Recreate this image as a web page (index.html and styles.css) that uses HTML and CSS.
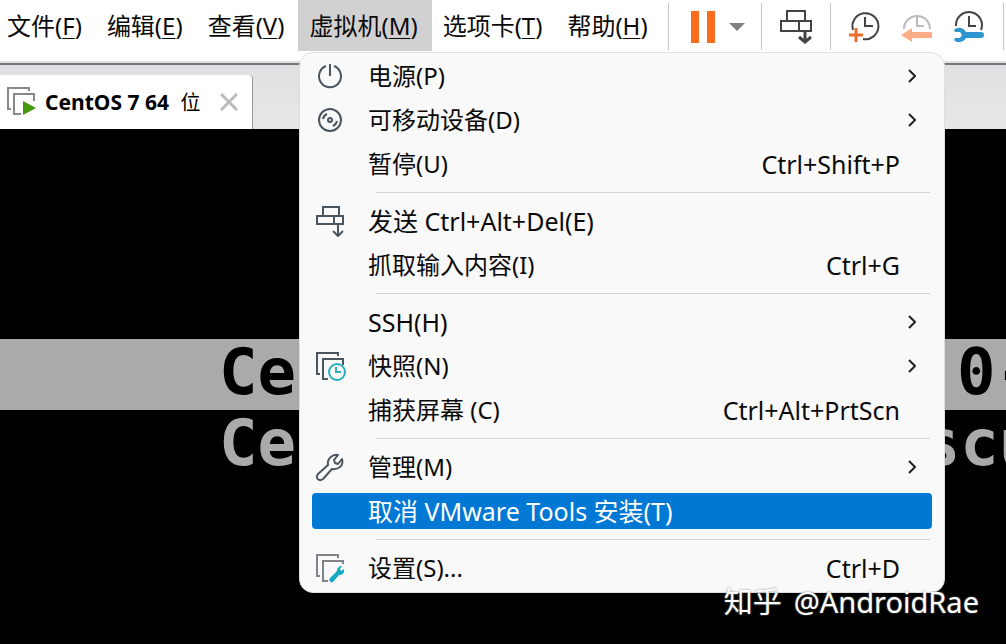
FILE: index.html
```html
<!DOCTYPE html>
<html lang="zh-CN">
<head>
<meta charset="utf-8">
<title>CentOS 7 64 位</title>
<link rel="stylesheet" href="styles.css">
</head>
<body>
<svg class="defs" aria-hidden="true">
  <symbol id="send" viewBox="0 0 32 34">
    <g fill="none" stroke="currentColor" stroke-width="2"><path d="M7 11V1h18v10M1 11h30v10H1zM19 11v10"/><path stroke-width="3" d="M25 21v11M19 27l6 5 6-5"/></g>
  </symbol>
  <symbol id="sheets" viewBox="0 0 30 30">
    <path fill="none" stroke="currentColor" stroke-width="2" d="M4 22H1V1h21v3M12 27H7V7h20v6"/>
  </symbol>
  <symbol id="chevron" viewBox="0 0 8 14"><path d="M1 1l6 6-6 6" fill="none" stroke="#222" stroke-width="2"/></symbol>
</svg>
<header class="topbar">
  <nav class="menubar">
    <button>文件(<u>F</u>)</button>
    <button>编辑(<u>E</u>)</button>
    <button>查看(<u>V</u>)</button>
    <button class="open" aria-expanded="true">虚拟机(<u>M</u>)</button>
    <button>选项卡(<u>T</u>)</button>
    <button>帮助(<u>H</u>)</button>
  </nav>
  <div class="tools tools-power">
    <button aria-label="暂停"><svg width="24" height="32" viewBox="0 0 24 32"><path fill="#f96b1d" d="M0 0h8v32H0zM16 0h8v32h-8z"/></svg></button>
    <button aria-label="电源选项"><svg width="16" height="8" viewBox="0 0 16 8"><path fill="#808080" d="M0 0h16L8 8z"/></svg></button>
  </div>
  <div class="tools tools-send">
    <button aria-label="发送 Ctrl+Alt+Del"><svg width="32" height="34"><use href="#send"/></svg></button>
  </div>
  <div class="tools tools-snap">
    <button aria-label="拍摄快照"><svg width="32" height="32" viewBox="0 0 32 32" fill="none" stroke="#444" stroke-width="2"><path d="M4 19A13 13 0 1 1 14 28M16 6v9h8"/><path stroke="#e8702c" stroke-width="3" d="M0 24h14M7 17v14"/></svg></button>
    <button aria-label="恢复快照"><svg width="32" height="32" viewBox="0 0 32 32" fill="none" stroke="#bbb" stroke-width="2"><path d="M3 18A13 13 0 1 1 29 18M16 5v10h7"/><path fill="#fbae86" stroke="none" d="M0 24l11-7v4h20v6H11v4z"/></svg></button>
    <button aria-label="管理快照"><svg width="32" height="32" viewBox="0 0 32 32" fill="none" stroke="#444" stroke-width="2"><path d="M3 15A13 13 0 1 1 28 19M16 5v10h7"/><path fill="#2f95d0" stroke="none" d="M1 19C5 15 11 17 13 21h15a3 3 0 0 1 0 6H13C11 31 5 33 1 29l1-2h5l2-3-2-3H2z"/></svg></button>
  </div>
  <div class="tools tools-end"></div>
</header>
<div class="tabs">
  <div class="tab">
    <svg class="tab-icon" width="30" height="30" viewBox="0 0 30 30"><path fill="none" stroke="#888" stroke-width="2" d="M4 22H1V1h21v3M14 27H7V7h20v7"/><path fill="#45990f" d="M16 14l13 7-13 7z"/></svg>
    <span>CentOS 7 64 <span class="cjk">位</span></span>
    <button aria-label="关闭"><svg width="18" height="18" viewBox="0 0 18 18"><path d="M1 1l16 16M17 1L1 17" stroke="#bbb" stroke-width="3"/></svg></button>
  </div>
</div>
<main class="console">
  <div class="boot selected"><span>Ce</span><span class="version">0-</span></div>
  <div class="boot"><span>Ce</span><span class="rescue">scu</span></div>
</main>
<div class="menu" role="menu">
  <button class="item" role="menuitem"><svg class="icon" viewBox="0 0 32 32"><path fill="none" stroke="currentColor" stroke-width="2" d="M12 6A11 11 0 1 0 20 6M16 4v12"/></svg><span>电源(P)</span><svg class="arrow"><use href="#chevron"/></svg></button>
  <button class="item" role="menuitem"><svg class="icon" viewBox="0 0 32 32"><g fill="none" stroke="currentColor" stroke-width="2"><circle cx="16" cy="16" r="11"/><circle cx="16" cy="16" r="2"/><path d="M9 15a7 7 0 0 1 4-5M23 17a7 7 0 0 1-4 5"/></g></svg><span>可移动设备(D)</span><svg class="arrow"><use href="#chevron"/></svg></button>
  <button class="item" role="menuitem"><i class="icon"></i><span>暂停(U)</span><kbd>Ctrl+Shift+P</kbd></button>
  <hr>
  <button class="item" role="menuitem"><svg class="icon" viewBox="0 0 32 32"><g fill="none" stroke="currentColor" stroke-width="2"><path d="M9 11V2h16v9M3 11h26v8H3zM20 11v8M24 19v12M19 26l5 5 5-5"/></g></svg><span class="latin">发送 Ctrl+Alt+Del(E)</span></button>
  <button class="item" role="menuitem"><i class="icon"></i><span>抓取输入内容(I)</span><kbd>Ctrl+G</kbd></button>
  <hr>
  <button class="item" role="menuitem"><i class="icon"></i><span class="latin">SSH(H)</span><svg class="arrow"><use href="#chevron"/></svg></button>
  <button class="item" role="menuitem"><svg class="icon" viewBox="0 0 32 32"><use href="#sheets" x="2" y="2" width="30" height="30"/><circle cx="23" cy="22" r="8" fill="#f9f9f9" stroke="#2aafbd" stroke-width="2"/><path d="M22 17v5h5" fill="none" stroke="#2aafbd" stroke-width="2"/></svg><span>快照(N)</span><svg class="arrow"><use href="#chevron"/></svg></button>
  <button class="item" role="menuitem"><i class="icon"></i><span>捕获屏幕 (C)</span><kbd>Ctrl+Alt+PrtScn</kbd></button>
  <hr>
  <button class="item" role="menuitem"><svg class="icon" viewBox="0 0 32 32"><path fill="none" stroke="currentColor" stroke-width="2" stroke-linejoin="round" d="M4 23L14 14C13 8 18 3 24 4L20 9l1 3 3 1 4-5C30 14 25 19 18 18L9 28C5 31 1 27 4 23z"/></svg><span>管理(M)</span><svg class="arrow"><use href="#chevron"/></svg></button>
  <button class="item active" role="menuitem"><i class="icon"></i><span class="latin">取消 VMware Tools 安装(T)</span></button>
  <hr>
  <button class="item" role="menuitem"><svg class="icon sheet-gray" viewBox="0 0 32 32"><use href="#sheets" x="2" y="2" width="30" height="30"/><path fill="#f9f9f9" d="M14 24l12-12h5v18H14z"/><path fill="#14aac0" d="M16 26l7-7c0-3 2-5 5-5l-2 3 1 2 3-2c1 4-2 6-5 6l-6 7c-2 1-5-1-3-4z"/></svg><span>设置(S)...</span><kbd>Ctrl+D</kbd></button>
</div>
<div class="credit"><span>知乎</span><span>@AndroidRae</span></div>
</body>
</html>
```
FILE: styles.css
```css
* { box-sizing: border-box; }
body {
  margin: 0;
  min-height: 100vh;
  display: flex;
  flex-direction: column;
  position: relative;
  overflow: hidden;
  background: #000;
  color: #0a0a0a;
  font: 24px/32px "Noto Sans", "Noto Sans CJK SC", sans-serif;
}
button {
  margin: 0;
  padding: 0;
  border: 0;
  background: none;
  color: inherit;
  font: inherit;
  text-align: left;
  white-space: nowrap;
}
svg { display: block; }
.defs { position: absolute; width: 0; height: 0; }

.topbar {
  display: flex;
  align-items: flex-start;
  height: 65px;
  background: #fff;
  border-bottom: 2px solid #74787c;
  box-shadow: inset 0 -2px #dfe1e3;
}
.menubar { display: flex; flex: none; margin-left: -4px; }
.menubar button { height: 51px; padding: 0 14px 0 11px; }
.menubar .open { background: #d1d1d1; }
.menubar u { text-decoration-thickness: 1px; text-underline-offset: 3px; }
.tools {
  display: flex;
  flex: none;
  align-items: center;
  height: 47px;
  margin-top: 3px;
  border-left: 1px solid #c6c6c6;
  color: #444;
}
.tools-power { gap: 14px; padding: 0 16px 0 22px; margin-left: 6px; }
.tools-send { padding: 0 18px; }
.tools-snap { gap: 20px; padding: 0 18px; }

.tabs {
  display: flex;
  align-items: flex-end;
  height: 64px;
  background: linear-gradient(#e0e0e2, #e6e7e9);
}
.tab {
  display: flex;
  align-items: center;
  height: 54px;
  padding: 0 14px 0 7px;
  background: #fff;
  border-right: 1px solid #999;
  border-top-right-radius: 4px;
  color: #000;
  font-size: 21px;
  font-weight: bold;
}
.tab > span { margin: 0 20px 0 8px; white-space: nowrap; }
.tab .cjk { margin-left: 6px; font: 20px "Noto Sans CJK SC", sans-serif; }

.console { flex: 1; padding-top: 210px; background: #000; }
.boot {
  display: flex;
  justify-content: space-between;
  height: 71px;
  padding-left: 219px;
  color: #aaa;
  font: bold 64px/66px "DejaVu Sans Mono", monospace;
  white-space: nowrap;
}
.boot.selected { background: #aaa; color: #000; }
.version, .rescue { display: flex; width: 61px; overflow: hidden; }
.version { padding-left: 12px; }
.rescue { justify-content: center; padding-left: 8px; }

.menu {
  position: absolute;
  top: 52px;
  left: 299px;
  display: flex;
  flex-direction: column;
  width: 646px;
  padding: 0 12px 3px;
  background: #f9f9f9;
  border: 1px solid #dedede;
  border-radius: 14px;
}
.item {
  display: flex;
  align-items: center;
  width: 100%;
  height: 36px;
  margin: 5px 0 3px;
  padding: 0 32px 0 2px;
  border-radius: 4px;
}
.item.active { background: #0078d4; color: #fff; }
.item span { flex: 1; }
.icon { width: 32px; height: 32px; margin-right: 22px; color: #4a5560; }
.sheet-gray { color: #808488; }
.arrow { width: 8px; height: 14px; margin-right: -16px; }
.latin, kbd { font: inherit; font-size: 25px; }
.menu hr {
  width: auto;
  height: 1px;
  margin: 7px 2px 5px 64px;
  border: 0;
  background: #d3d3d3;
}
.credit {
  position: absolute;
  right: 27px;
  bottom: 22px;
  display: flex;
  gap: 12px;
  color: #fff;
  font-size: 29px;
  line-height: 40px;
  text-shadow: 0 0 2px #777;
}
```
